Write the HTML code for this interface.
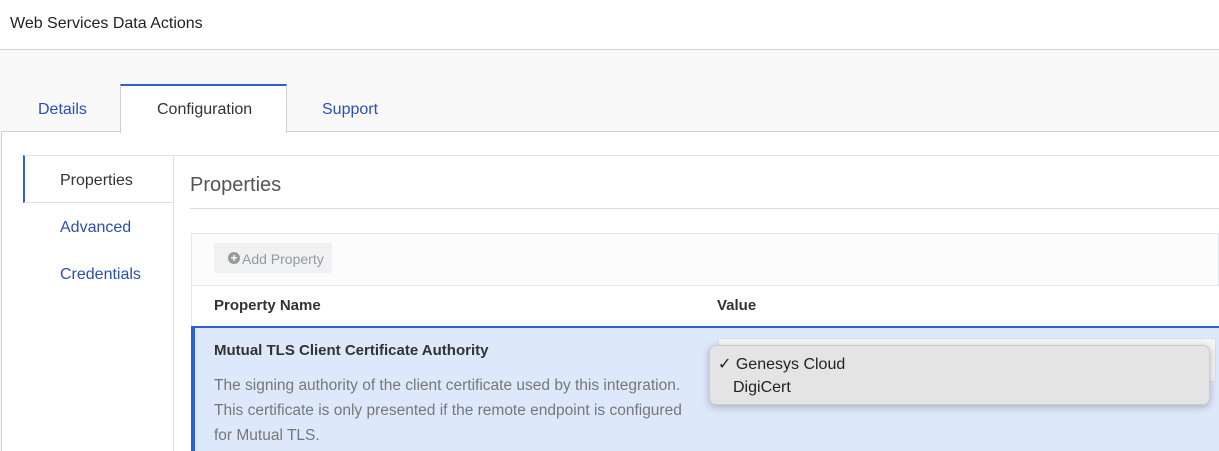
<!DOCTYPE html>
<html><head><style>
body{margin:0;width:1219px;height:451px;overflow:hidden;background:#f9f9f9;font-family:"Liberation Sans",sans-serif;position:relative}
div,span{position:absolute;box-sizing:border-box}
.t{white-space:nowrap}
</style></head><body>
<div style="left:0;top:0;width:1219px;height:50px;background:#fff;border-bottom:1px solid #d5d5d5"></div>
<div class="t" style="left:10px;top:15px;font-size:16px;color:#222">Web Services Data Actions</div>
<div style="left:1px;top:131px;width:1218px;height:320px;background:#fff;border-top:1px solid #cfcfcf;border-left:1px solid #cfcfcf"></div>
<div class="t" style="left:38px;top:101px;font-size:16px;color:#2a4fb5">Details</div>
<div style="left:120px;top:84px;width:167px;height:49px;background:#fff;border-top:2px solid #2a62d6;border-left:1px solid #cfcfcf;border-right:1px solid #cfcfcf"></div>
<div class="t" style="left:157px;top:101px;font-size:16px;color:#333">Configuration</div>
<div class="t" style="left:322px;top:101px;font-size:16px;color:#2a4fb5">Support</div>
<div style="left:173px;top:155px;width:1046px;height:1px;background:#e2e2e2"></div>
<div style="left:23px;top:155px;width:151px;height:48px;border-left:2px solid #2a62d6;border-top:1px solid #e2e2e2;border-bottom:1px solid #e2e2e2"></div>
<div style="left:173px;top:155px;width:1px;height:296px;background:#e2e2e2"></div>
<div class="t" style="left:60px;top:172px;font-size:16px;color:#333">Properties</div>
<div class="t" style="left:60px;top:219px;font-size:16px;color:#2a4fb5">Advanced</div>
<div class="t" style="left:60px;top:266px;font-size:16px;color:#2a4fb5">Credentials</div>
<div class="t" style="left:190px;top:174px;font-size:20px;color:#555;font-weight:300">Properties</div>
<div style="left:190px;top:208px;width:1029px;height:1px;background:#ddd"></div>
<div style="left:191px;top:233px;width:1028px;height:218px;border:1px solid #e3e6ea;background:#fcfcfd"></div>
<div style="left:214px;top:243px;width:118px;height:30px;background:#f0f1f3;border-radius:2px"></div>
<div style="left:228px;top:252px;width:12px;height:12px;border-radius:50%;background:#999;color:#fff;font-size:12px;line-height:12px;text-align:center;font-weight:bold">+</div>
<div class="t" style="left:242px;top:251px;font-size:14px;color:#999">Add Property</div>
<div style="left:192px;top:285px;width:1027px;height:42px;background:#fff;border-top:1px solid #e3e6ea"></div>
<div class="t" style="left:214px;top:297px;font-size:15px;font-weight:bold;color:#333">Property Name</div>
<div class="t" style="left:717px;top:297px;font-size:15px;font-weight:bold;color:#333">Value</div>
<div style="left:191px;top:326px;width:1028px;height:125px;background:#dde8fb;border-top:2px solid #2a62d6;border-left:4px solid #2a62d6"></div>
<div class="t" style="left:214px;top:342px;font-size:15px;font-weight:bold;color:#333">Mutual TLS Client Certificate Authority</div>
<div style="left:214px;top:373px;width:480px;font-size:15.5px;line-height:25px;color:#777">The signing authority of the client certificate used by this integration. This certificate is only presented if the remote endpoint is configured for Mutual TLS.</div>
<div style="left:718px;top:338px;width:498px;height:44px;background:#f4f5f7;border:1px solid #ddd;border-radius:3px"></div>
<div style="left:709px;top:345px;width:501px;height:60px;background:#e4e4e5;border-radius:7px;box-shadow:0 2px 8px rgba(0,0,0,.25);border:1px solid #ccc"></div>
<div class="t" style="left:718px;top:354px;font-size:16px;color:#222">✓ Genesys Cloud</div>
<div class="t" style="left:733px;top:379px;font-size:16px;color:#222">DigiCert</div>
</body></html>
